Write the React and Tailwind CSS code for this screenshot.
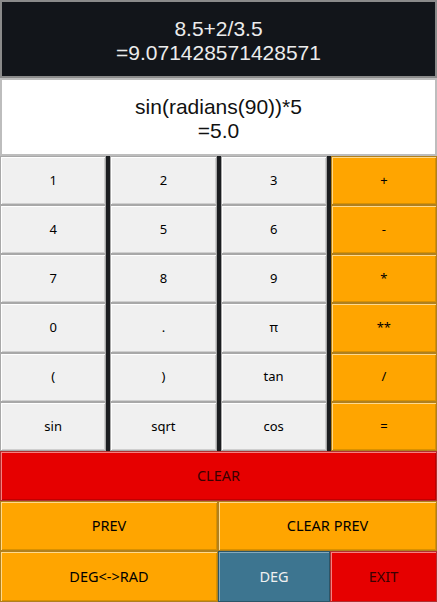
const grayBtn =
  'flex items-center justify-center bg-[#f0f0f0] text-black border border-[#a8a8a8] shadow-[inset_1px_1px_0_#ffffff,inset_-1px_-1px_0_#cfcfcf]';
const orangeBtn =
  'flex items-center justify-center bg-[#ffa500] text-black border border-[#b0801e] shadow-[inset_1px_1px_0_#ffd98c,inset_-1px_-1px_0_#d99000]';

const rows = [
  ['1', '2', '3', '+'],
  ['4', '5', '6', '-'],
  ['7', '8', '9', '*'],
  ['0', '.', 'π', '**'],
  ['(', ')', 'tan', '/'],
  ['sin', 'sqrt', 'cos', '='],
];

function App() {
  return (
    <div className="w-[437px] h-[602px] flex flex-col bg-[#1b1d20] text-[13px] font-['Noto_Sans',sans-serif] overflow-hidden">
      {/* previous result */}
      <div className="h-[78px] pt-[4px] flex flex-col items-center justify-center bg-[#12151a] border-2 border-[#8a8a8a] text-[#ececec] text-[21px] leading-[24px] font-['Liberation_Sans',Arial,sans-serif]">
        <div>8.5+2/3.5</div>
        <div>=9.071428571428571</div>
      </div>

      {/* current entry */}
      <div className="h-[78px] pt-[3px] flex flex-col items-center justify-center bg-white border-2 border-[#bdbdbd] text-[#111] text-[21px] leading-[24px] font-['Liberation_Sans',Arial,sans-serif]">
        <div>sin(radians(90))*5</div>
        <div>=5.0</div>
      </div>

      {/* keypad */}
      <div className="grid grid-cols-4 gap-x-[4px] h-[295px]">
        {rows.flat().map((k, i) => (
          <button key={i} className={i % 4 === 3 ? orangeBtn : grayBtn}>
            {k}
          </button>
        ))}
      </div>

      <div className="flex flex-col text-[14.5px]">
        <button className="h-[50px] flex items-center justify-center bg-[#e60000] text-[#3a0000] border border-[#b03030] shadow-[inset_1px_1px_0_#f58080,inset_-1px_-1px_0_#c00000]">
          CLEAR
        </button>

        <div className="flex h-[50px]">
          <button className={orangeBtn + ' w-[218px] text-[#3a2600]'}>PREV</button>
          <button className={orangeBtn + ' flex-1 text-[#3a2600]'}>CLEAR PREV</button>
        </div>

        <div className="flex h-[51px]">
          <button className={orangeBtn + ' w-[218px] text-[#3a2600]'}>DEG&lt;-&gt;RAD</button>
          <button className="w-[112px] flex items-center justify-center bg-[#3d7590] text-[#f0f0f0] border border-[#2b5669] shadow-[inset_1px_1px_0_#86a9bb]">
            DEG
          </button>
          <button className="flex-1 flex items-center justify-center bg-[#e60000] text-[#3a0000] border border-[#b03030] shadow-[inset_1px_1px_0_#f58080]">
            EXIT
          </button>
        </div>
      </div>
    </div>
  );
}

export default App;
